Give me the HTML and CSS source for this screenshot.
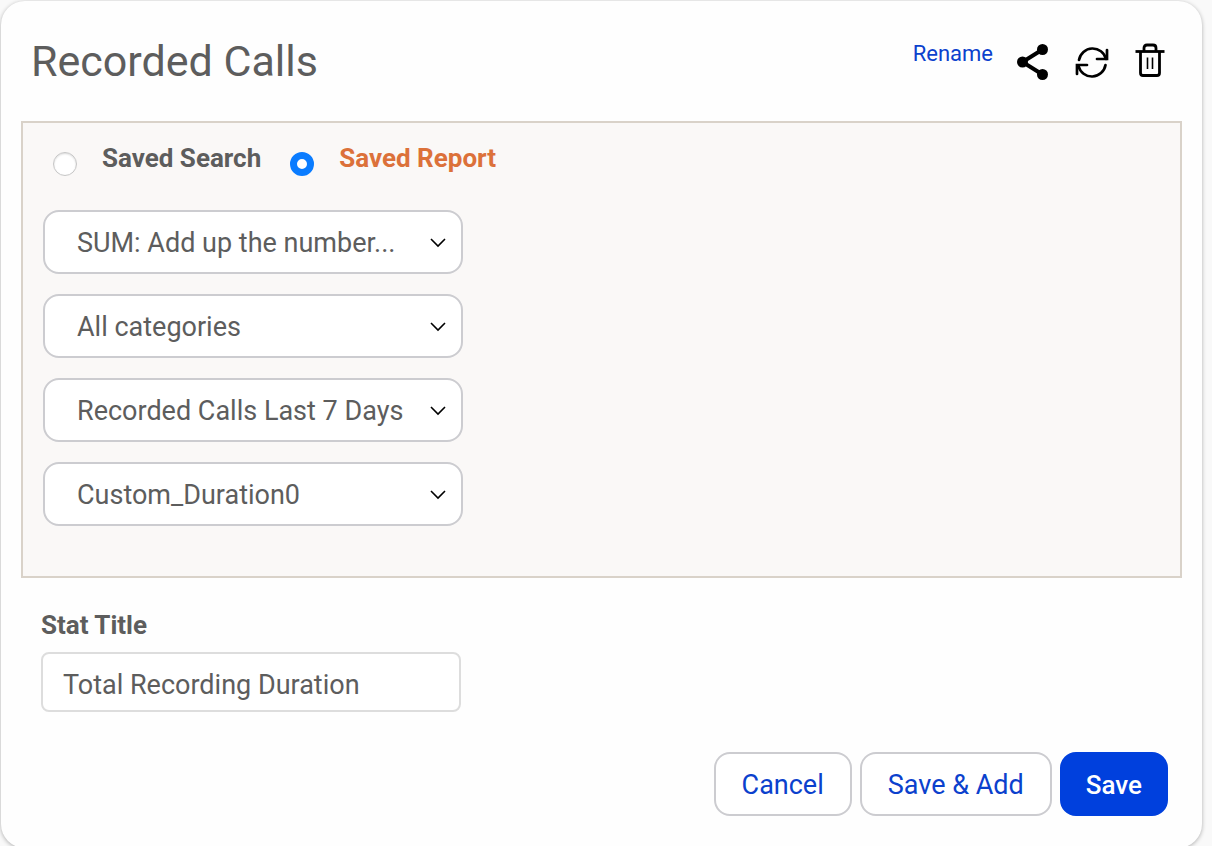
FILE: index.html
```
<!DOCTYPE html>
<html lang="en">
<head>
    <meta charset="UTF-8">
    <meta name="viewport" content="width=device-width, initial-scale=1.0">
    <title>Recorded Calls</title>
    <link rel="stylesheet" href="styles.css">
</head>
<body>
    <form class="card" onsubmit="return false">
        <header class="card-header">
            <h1>Recorded Calls</h1>
            <div class="card-actions">
                <a href="#" class="rename">Rename</a>
                <button type="button" class="icon-btn" aria-label="Share">
                    <svg width="34" height="38" viewBox="0 0 34 38">
                        <path d="M25.500 6.500L5.500 19L25.500 31.500" fill="none" stroke="#000" stroke-width="4"/>
                        <circle cx="25.500" cy="6.500" r="5.500"/>
                        <circle cx="5.500" cy="19" r="5.500"/>
                        <circle cx="25.500" cy="31.500" r="5.500"/>
                    </svg>
                </button>
                <button type="button" class="icon-btn" aria-label="Refresh">
                    <svg width="34" height="38" viewBox="0 0 34 38" fill="none" stroke="#000" stroke-width="2.700" stroke-linecap="round">
                        <path d="M4 17A13.800 13.800 0 0 1 31 16"/>
                        <path d="M32 7V16H22"/>
                        <path d="M30.500 22A13.800 13.800 0 0 1 3.500 23"/>
                        <path d="M2 31V22H12"/>
                    </svg>
                </button>
                <button type="button" class="icon-btn" aria-label="Delete">
                    <svg width="34" height="38" viewBox="0 0 34 38" fill="none" stroke="#000" stroke-width="2.800">
                        <path d="M2.500 8.500H31.500"/>
                        <path d="M11 8.500V5Q11 2 14 2H20Q23 2 23 5V8.500"/>
                        <path d="M7.500 8.500V30Q7.500 32.500 10 32.500H24Q26.500 32.500 26.500 30V8.500"/>
                        <path d="M14.500 14.500V26M19.500 14.500V26" stroke-width="1.600"/>
                    </svg>
                </button>
            </div>
        </header>

        <section class="panel">
            <div class="source">
                <input type="radio" name="source" id="saved-search">
                <label for="saved-search">Saved Search</label>
                <input type="radio" name="source" id="saved-report" checked>
                <label for="saved-report">Saved Report</label>
            </div>

            <div class="select">
                <select aria-label="Calculation">
                    <option>SUM: Add up the number...</option>
                </select>
                <svg width="16" height="10" viewBox="0 0 16 10"><path d="M1 1L8 8L15 1"/></svg>
            </div>
            <div class="select">
                <select aria-label="Category">
                    <option>All categories</option>
                </select>
                <svg width="16" height="10" viewBox="0 0 16 10"><path d="M1 1L8 8L15 1"/></svg>
            </div>
            <div class="select">
                <select aria-label="Report">
                    <option>Recorded Calls Last 7 Days</option>
                </select>
                <svg width="16" height="10" viewBox="0 0 16 10"><path d="M1 1L8 8L15 1"/></svg>
            </div>
            <div class="select">
                <select aria-label="Field">
                    <option>Custom_Duration0</option>
                </select>
                <svg width="16" height="10" viewBox="0 0 16 10"><path d="M1 1L8 8L15 1"/></svg>
            </div>
        </section>

        <div class="field">
            <label for="stat-title">Stat Title</label>
            <input type="text" id="stat-title" value="Total Recording Duration">
        </div>

        <footer class="card-footer">
            <button type="button" class="btn">Cancel</button>
            <button type="button" class="btn">Save &amp; Add</button>
            <button type="submit" class="btn btn-primary">Save</button>
        </footer>
    </form>
</body>
</html>
```
FILE: styles.css
```
* {
    box-sizing: border-box;
}
body {
    margin: 0;
    padding: 1px 10px 0 1px;
    background: #f9f9f9;
    color: #5d5d5d;
    font-family: Roboto, "Liberation Sans", sans-serif;
    font-size: 27px;
    overflow: hidden;
}
.card {
    padding: 0 20px 32px;
    background: #fefefe;
    border-radius: 24px;
    box-shadow: 0 1px 4px rgba(0,0,0,0.3);
}
.card-header {
    display: flex;
    justify-content: space-between;
    height: 120px;
    padding: 32px 15px 0 10px;
}
h1 {
    margin: 0;
    font-size: 43px;
    font-weight: 400;
    line-height: 56px;
}
.card-actions {
    display: flex;
    align-items: flex-start;
    gap: 24px;
    padding-top: 10px;
}
.rename {
    color: #0b41cd;
    font-size: 22px;
    line-height: 22px;
    text-decoration: none;
}
.icon-btn {
    padding: 0;
    border: none;
    background: none;
    cursor: pointer;
}
.icon-btn svg {
    display: block;
}
.panel {
    padding: 20px 20px 50px;
    background: #faf8f7;
    border: 2px solid #d9d2c9;
}
.source {
    display: flex;
    height: 67px;
    padding-left: 10px;
    font-size: 26px;
    font-weight: 700;
    line-height: 30px;
}
.source input {
    appearance: none;
    width: 24px;
    height: 24px;
    margin: 9px 25px 0 0;
    border: 1px solid #c6c6c6;
    border-radius: 50%;
    background: #fff;
    box-shadow: inset 0 1px 2px rgba(0,0,0,0.15);
}
.source input:checked {
    border: 7px solid #0a7cff;
    box-shadow: none;
}
.source label {
    margin-right: 29px;
}
.source input:checked + label {
    color: #dc713a;
}
.select {
    position: relative;
    width: 420px;
    max-width: 100%;
}
.select + .select {
    margin-top: 20px;
}
.select select {
    appearance: none;
    display: block;
    width: 100%;
    height: 64px;
    padding: 2px 44px 0 32px;
    border: 2px solid #ccccd0;
    border-radius: 16px;
    background: #fff;
    color: inherit;
    font: inherit;
}
.select svg {
    position: absolute;
    right: 17px;
    top: 28px;
    fill: none;
    stroke: #000;
    stroke-width: 1.6;
    pointer-events: none;
}
.field {
    padding: 32px 20px 0;
}
.field label {
    display: block;
    margin-bottom: 12px;
    font-size: 26px;
    font-weight: 700;
    line-height: 30px;
}
.field input {
    display: block;
    width: 420px;
    max-width: 100%;
    height: 60px;
    padding: 6px 20px 0;
    border: 2px solid #dddddd;
    border-radius: 8px;
    background: #fff;
    color: inherit;
    font: inherit;
}
.card-footer {
    display: flex;
    justify-content: flex-end;
    gap: 8px;
    padding: 40px 14px 0 0;
}
.btn {
    height: 64px;
    padding: 2px 26px 0;
    border: 2px solid #ccccd0;
    border-radius: 16px;
    background: #fff;
    color: #0b41cd;
    font: inherit;
    cursor: pointer;
}
.btn-primary {
    padding: 2px 24px 0;
    border-color: #0040dd;
    background: #0040dd;
    color: #fff;
    font-size: 26px;
    font-weight: 500;
}
```
